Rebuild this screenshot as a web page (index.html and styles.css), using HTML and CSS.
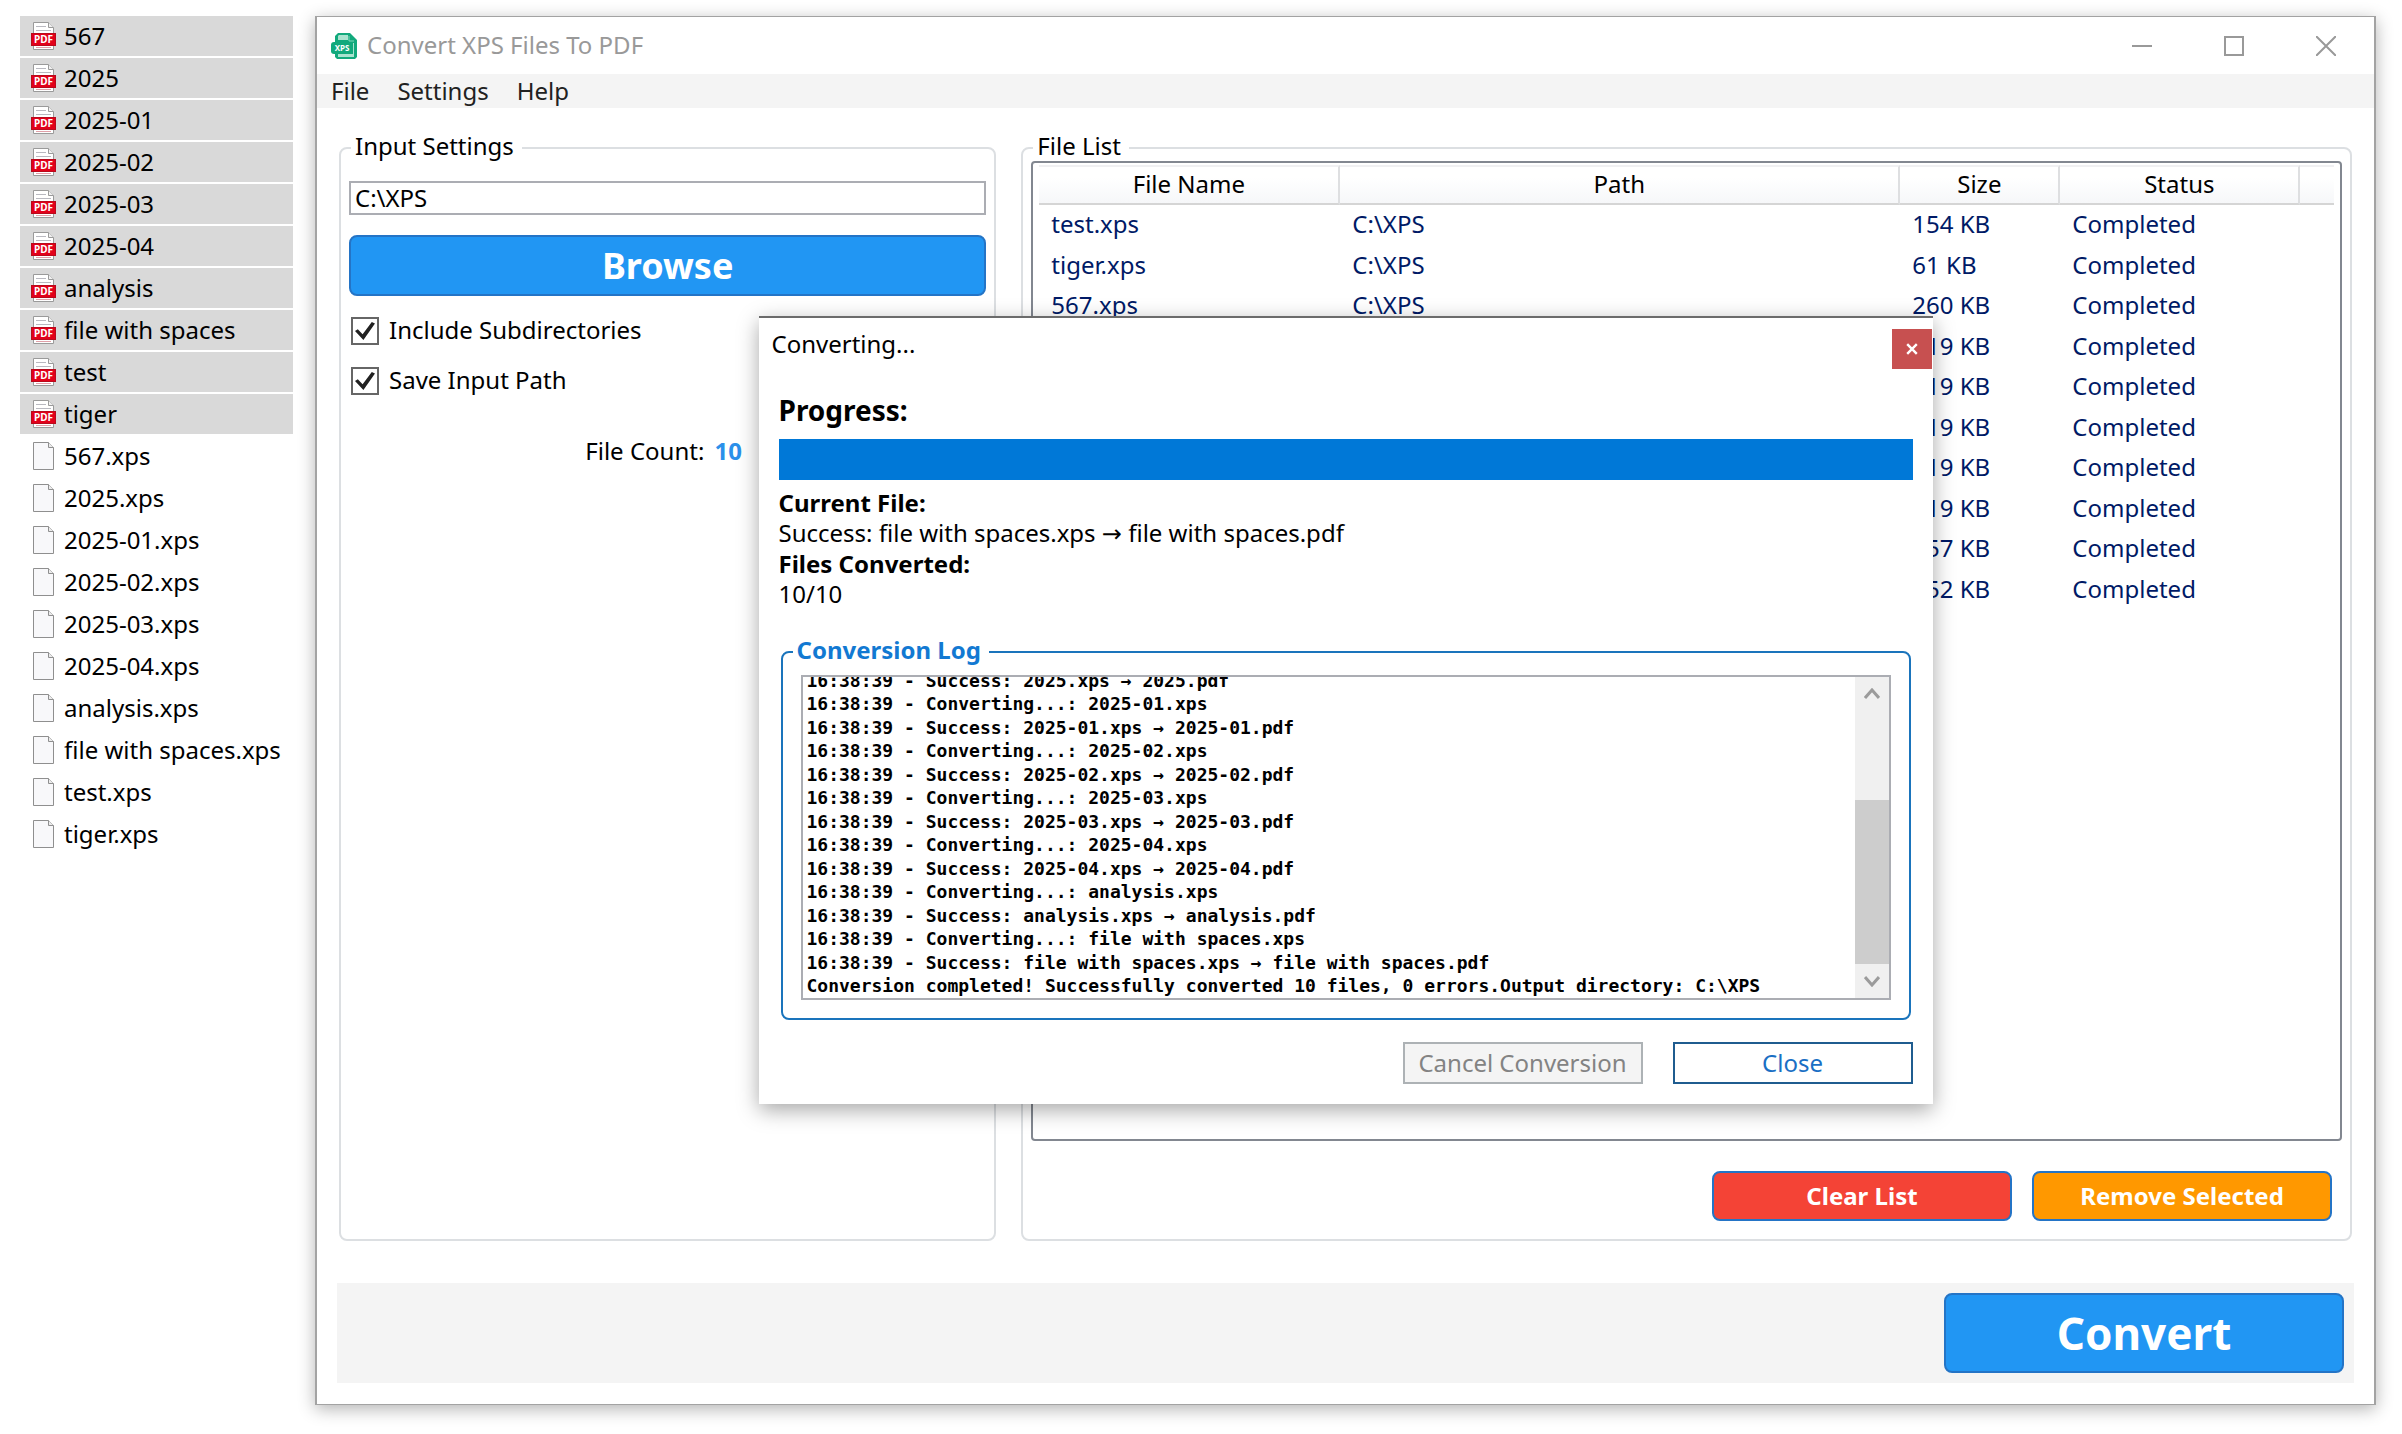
FILE: index.html
```html
<!DOCTYPE html>
<html lang="en">
<head>
    <meta charset="UTF-8">
    <meta name="viewport" content="width=device-width, initial-scale=1.0">
    <title>Convert XPS Files To PDF</title>
    <link rel="stylesheet" href="styles.css">
</head>
<body>
    <svg class="icon-defs" aria-hidden="true">
        <symbol id="icon-pdf" viewBox="0 0 25 28">
            <path d="M2.5.5h15l5 5v22h-20z" fill="#fff" stroke="#9a9a9a"/>
            <path d="M17.5.5v5h5" fill="#f0f0f0" stroke="#9a9a9a"/>
            <path d="M5 4.5h10M5 8.5h15" stroke="#b9b9c0"/>
            <path d="M5 25.5h15" stroke="#e0a0a8"/>
            <rect x=".5" y="11.5" width="24" height="12" fill="#e2001a" stroke="#b80a1c"/>
            <text x="12.5" y="21" class="icon-pdf-text">PDF</text>
        </symbol>
        <symbol id="icon-file" viewBox="0 0 25 28">
            <path d="M2.5.5h15l5 5v22h-20z" fill="#f8f8fa" stroke="#8f8f8f"/>
            <path d="M17.5.5v5h5" fill="#ececec" stroke="#8f8f8f"/>
        </symbol>
    </svg>

    <aside class="file-panel">
        <ul>
            <li class="selected"><svg><use href="#icon-pdf"/></svg>567</li>
            <li class="selected"><svg><use href="#icon-pdf"/></svg>2025</li>
            <li class="selected"><svg><use href="#icon-pdf"/></svg>2025-01</li>
            <li class="selected"><svg><use href="#icon-pdf"/></svg>2025-02</li>
            <li class="selected"><svg><use href="#icon-pdf"/></svg>2025-03</li>
            <li class="selected"><svg><use href="#icon-pdf"/></svg>2025-04</li>
            <li class="selected"><svg><use href="#icon-pdf"/></svg>analysis</li>
            <li class="selected"><svg><use href="#icon-pdf"/></svg>file with spaces</li>
            <li class="selected"><svg><use href="#icon-pdf"/></svg>test</li>
            <li class="selected"><svg><use href="#icon-pdf"/></svg>tiger</li>
            <li><svg><use href="#icon-file"/></svg>567.xps</li>
            <li><svg><use href="#icon-file"/></svg>2025.xps</li>
            <li><svg><use href="#icon-file"/></svg>2025-01.xps</li>
            <li><svg><use href="#icon-file"/></svg>2025-02.xps</li>
            <li><svg><use href="#icon-file"/></svg>2025-03.xps</li>
            <li><svg><use href="#icon-file"/></svg>2025-04.xps</li>
            <li><svg><use href="#icon-file"/></svg>analysis.xps</li>
            <li><svg><use href="#icon-file"/></svg>file with spaces.xps</li>
            <li><svg><use href="#icon-file"/></svg>test.xps</li>
            <li><svg><use href="#icon-file"/></svg>tiger.xps</li>
        </ul>
    </aside>

    <div class="window">
        <header class="title-bar">
            <svg class="app-icon" viewBox="0 0 26 26">
                <path d="M7 0h12l7 7v17l-2 2H6l-2-2V3z" fill="#12a97c"/>
                <path d="M8 2h9v5H7V3z" fill="#a9e3cf"/>
                <path d="M18 3v5h5" fill="none" stroke="#7fd6b8"/>
                <path d="M7 21h16v3H7zM22 10h1v11h-1z" fill="#a9e3cf"/>
                <rect y="9" width="22" height="12" rx="3" fill="#12a97c"/>
                <text x="11" y="18" class="app-icon-text">XPS</text>
            </svg>
            <h1>Convert XPS Files To PDF</h1>
            <div class="window-buttons">
                <button aria-label="Minimize"><svg viewBox="0 0 20 20"><path d="M0 10h20"/></svg></button>
                <button aria-label="Maximize"><svg viewBox="0 0 20 20"><path d="M1 1h18v18H1z"/></svg></button>
                <button aria-label="Close"><svg viewBox="0 0 20 20"><path d="M0 0l20 20M20 0L0 20"/></svg></button>
            </div>
        </header>
        <nav class="menu-bar">
            <button>File</button>
            <button>Settings</button>
            <button>Help</button>
        </nav>

        <main>
            <fieldset class="input-settings">
                <legend>Input Settings</legend>
                <input type="text" class="path-input" aria-label="Input path" value="C:\XPS">
                <button class="btn btn-blue browse">Browse</button>
                <label class="check"><input type="checkbox" checked>Include Subdirectories</label>
                <label class="check"><input type="checkbox" checked>Save Input Path</label>
                <p class="file-count">File Count: <strong>10</strong></p>
            </fieldset>

            <fieldset class="file-list">
                <legend>File List</legend>
                <div class="list-view">
                    <table>
                        <colgroup>
                            <col class="col-name">
                            <col class="col-path">
                            <col class="col-size">
                            <col class="col-status">
                            <col>
                        </colgroup>
                        <thead>
                            <tr><th>File Name</th><th>Path</th><th>Size</th><th>Status</th><th></th></tr>
                        </thead>
                        <tbody>
                            <tr><td>test.xps</td><td>C:\XPS</td><td>154 KB</td><td>Completed</td><td></td></tr>
                            <tr><td>tiger.xps</td><td>C:\XPS</td><td>61 KB</td><td>Completed</td><td></td></tr>
                            <tr><td>567.xps</td><td>C:\XPS</td><td>260 KB</td><td>Completed</td><td></td></tr>
                            <tr><td>2025.xps</td><td>C:\XPS</td><td>119 KB</td><td>Completed</td><td></td></tr>
                            <tr><td>2025-01.xps</td><td>C:\XPS</td><td>119 KB</td><td>Completed</td><td></td></tr>
                            <tr><td>2025-02.xps</td><td>C:\XPS</td><td>119 KB</td><td>Completed</td><td></td></tr>
                            <tr><td>2025-03.xps</td><td>C:\XPS</td><td>119 KB</td><td>Completed</td><td></td></tr>
                            <tr><td>2025-04.xps</td><td>C:\XPS</td><td>119 KB</td><td>Completed</td><td></td></tr>
                            <tr><td>analysis.xps</td><td>C:\XPS</td><td>157 KB</td><td>Completed</td><td></td></tr>
                            <tr><td>file with spaces.xps</td><td>C:\XPS</td><td>152 KB</td><td>Completed</td><td></td></tr>
                        </tbody>
                    </table>
                </div>
                <div class="list-actions">
                    <button class="btn btn-red">Clear List</button>
                    <button class="btn btn-orange">Remove Selected</button>
                </div>
            </fieldset>
        </main>

        <footer>
            <button class="btn btn-blue convert">Convert</button>
        </footer>

        <div class="dialog" role="dialog" aria-labelledby="dialog-title">
            <div class="dialog-header">
                <h2 id="dialog-title">Converting...</h2>
                <button class="dialog-close" aria-label="Close dialog">
                    <svg viewBox="0 0 10 10"><path d="M1 1l8 8M9 1L1 9"/></svg>
                </button>
            </div>
            <div class="dialog-body">
                <label class="progress-label" for="progress">Progress:</label>
                <progress id="progress" value="10" max="10"></progress>
                <dl>
                    <dt>Current File:</dt>
                    <dd>Success: file with spaces.xps <span class="arrow">→</span> file with spaces.pdf</dd>
                    <dt>Files Converted:</dt>
                    <dd>10/10</dd>
                </dl>
                <fieldset class="log-group">
                    <legend>Conversion Log</legend>
                    <div class="log">
                        <ol class="log-lines">
                            <li>16:38:39 - Success: 2025.xps → 2025.pdf</li>
                            <li>16:38:39 - Converting...: 2025-01.xps</li>
                            <li>16:38:39 - Success: 2025-01.xps → 2025-01.pdf</li>
                            <li>16:38:39 - Converting...: 2025-02.xps</li>
                            <li>16:38:39 - Success: 2025-02.xps → 2025-02.pdf</li>
                            <li>16:38:39 - Converting...: 2025-03.xps</li>
                            <li>16:38:39 - Success: 2025-03.xps → 2025-03.pdf</li>
                            <li>16:38:39 - Converting...: 2025-04.xps</li>
                            <li>16:38:39 - Success: 2025-04.xps → 2025-04.pdf</li>
                            <li>16:38:39 - Converting...: analysis.xps</li>
                            <li>16:38:39 - Success: analysis.xps → analysis.pdf</li>
                            <li>16:38:39 - Converting...: file with spaces.xps</li>
                            <li>16:38:39 - Success: file with spaces.xps → file with spaces.pdf</li>
                            <li>Conversion completed! Successfully converted 10 files, 0 errors.Output directory: C:\XPS</li>
                        </ol>
                        <div class="scrollbar">
                            <button aria-label="Scroll up"><svg viewBox="0 0 16 12"><path d="M1 10l7-8 7 8"/></svg></button>
                            <div class="scroll-track"><div class="scroll-thumb"></div></div>
                            <button aria-label="Scroll down"><svg viewBox="0 0 16 12"><path d="M1 2l7 8 7-8"/></svg></button>
                        </div>
                    </div>
                </fieldset>
                <div class="dialog-actions">
                    <button disabled>Cancel Conversion</button>
                    <button class="close-button">Close</button>
                </div>
            </div>
        </div>
    </div>
</body>
</html>
```

FILE: styles.css
```css
* {
    box-sizing: border-box;
    margin: 0;
    padding: 0;
}
body {
    display: flex;
    min-height: 100vh;
    padding: 16px 26px 29px 20px;
    gap: 22px;
    background: #fff;
    color: #000;
    font-family: "Noto Sans", "Open Sans", sans-serif;
    font-size: 24px;
    line-height: 32px;
}
button, input {
    font: inherit;
    color: inherit;
}
button {
    background: none;
    border: none;
}
h1, h2 {
    font-size: 24px;
    font-weight: normal;
}
ul, ol {
    list-style: none;
}
.icon-defs {
    position: absolute;
    width: 0;
    height: 0;
}
.icon-pdf-text {
    font: bold 10px "Noto Sans", sans-serif;
    fill: #fff;
    text-anchor: middle;
}

/* file panel */
.file-panel {
    width: 273px;
    flex-shrink: 0;
}
.file-panel ul {
    display: flex;
    flex-direction: column;
    gap: 2px;
}
.file-panel li {
    display: flex;
    align-items: center;
    gap: 8px;
    height: 40px;
    padding-left: 11px;
    white-space: nowrap;
}
.file-panel li.selected {
    background: #d9d9d9;
}
.file-panel svg {
    width: 25px;
    height: 28px;
}

/* main window */
.window {
    position: relative;
    flex: 1;
    min-width: 0;
    display: flex;
    flex-direction: column;
    background: #fff;
    border: 1px solid #a3a3a3;
    border-width: 1px 2px;
    box-shadow: 0 4px 16px rgba(0, 0, 0, 0.3);
}
.title-bar {
    display: flex;
    align-items: center;
    height: 57px;
    padding-left: 14px;
    color: #999;
}
.title-bar h1 {
    padding-bottom: 2px;
}
.app-icon {
    width: 26px;
    height: 26px;
    margin-right: 10px;
}
.app-icon-text {
    font: bold 8px "Noto Sans", sans-serif;
    fill: #fff;
    text-anchor: middle;
}
.window-buttons {
    display: flex;
    height: 100%;
    margin: 0 2px 0 auto;
}
.window-buttons button {
    display: flex;
    align-items: center;
    justify-content: center;
    width: 92px;
}
.window-buttons svg {
    width: 20px;
    height: 20px;
    fill: none;
    stroke: #999;
    stroke-width: 2;
}
.menu-bar {
    display: flex;
    height: 34px;
    background: #f4f4f4;
    color: #212121;
}
.menu-bar button {
    padding: 0 14px;
}
main {
    flex: 1;
    display: grid;
    grid-template-columns: 1fr 2fr;
    padding: 27px 20px 42px;
}
fieldset {
    min-width: 0;
    border: 2px solid #dcdfe2;
    border-radius: 8px;
}
legend {
    margin-left: 2px;
    padding: 0 8px 4px 4px;
    line-height: 22px;
}
.input-settings {
    margin: 0 13px 0 2px;
    padding: 20px 8px 18px;
}
.path-input {
    display: block;
    width: 100%;
    height: 34px;
    padding: 0 4px 2px;
    border: 2px solid #abadb3;
}
.btn {
    color: #fff;
    font-weight: bold;
    border: 2px solid #2474c6;
    border-radius: 8px;
}
.btn-blue {
    background: #2196f3;
}
.btn-red {
    background: #f44336;
}
.btn-orange {
    background: #ff9800;
}
.browse {
    width: 100%;
    height: 61px;
    margin: 20px 0 9px;
    font-size: 36px;
}
.check {
    display: flex;
    align-items: center;
    gap: 10px;
    height: 50px;
    padding-left: 2px;
}
.check input {
    appearance: none;
    width: 28px;
    height: 28px;
    margin-top: 2px;
    border: 2px solid #666;
    display: grid;
    place-content: center;
}
.check input:checked::before {
    content: "";
    width: 20px;
    height: 18px;
    background: #212121;
    clip-path: polygon(0 50%, 14% 40%, 38% 68%, 84% 0, 100% 8%, 42% 100%);
}
.file-count {
    margin-top: 30px;
    padding-right: 8px;
    text-align: center;
}
.file-count strong {
    margin-left: 4px;
    color: #2b90ea;
}
.file-list {
    display: flex;
    flex-direction: column;
    margin: 0 2px 0 12px;
    padding: 0 8px 18px;
}
.list-view {
    flex: 1;
    padding: 2px 6px;
    border: 2px solid #828790;
    border-radius: 4px;
}
table {
    width: 100%;
    table-layout: fixed;
    border-collapse: separate;
    border-spacing: 0;
}
.col-name {
    width: 301px;
}
.col-path {
    width: 560px;
}
.col-size {
    width: 160px;
}
.col-status {
    width: 240px;
}
th {
    height: 40px;
    padding-bottom: 2px;
    font-weight: normal;
    background: linear-gradient(#fff 30%, #f6f7f9);
    border-top: 2px solid #f0f0f2;
    border-right: 2px solid #dedfe1;
    border-bottom: 2px solid #d5d5d5;
}
th:last-child {
    border-right: none;
}
td {
    height: 40px;
    padding: 0 0 2px 12px;
    color: #001a66;
    white-space: nowrap;
}
tr:nth-child(even) td {
    height: 41px;
}
.list-actions {
    display: flex;
    justify-content: flex-end;
    gap: 20px;
    margin: 30px 10px 0 0;
}
.list-actions .btn {
    width: 300px;
    height: 50px;
}
footer {
    display: flex;
    justify-content: flex-end;
    margin: 0 20px 21px;
    padding: 10px;
    background: #f4f4f4;
}
.convert {
    width: 400px;
    height: 80px;
    font-size: 44px;
}

/* progress dialog */
.dialog {
    position: absolute;
    top: 299px;
    left: 50%;
    transform: translateX(-50%);
    width: 1174px;
    background: #fff;
    border-top: 2px solid #6b6b6b;
    box-shadow: 0 6px 20px rgba(0, 0, 0, 0.35);
}
.dialog-header {
    display: flex;
    justify-content: space-between;
    padding: 11px 1px 3px 13px;
}
.dialog-header h2 {
    line-height: 30px;
}
.dialog-close {
    width: 40px;
    height: 40px;
    background: #c75050;
}
.dialog-close svg {
    width: 12px;
    height: 12px;
    margin: auto;
    display: block;
    stroke: #fff;
    stroke-width: 2;
}
.dialog-body {
    display: flex;
    flex-direction: column;
    padding: 18px 20px 20px;
}
.progress-label {
    font-size: 28px;
    font-weight: bold;
    line-height: 40px;
}
progress {
    appearance: none;
    width: 100%;
    height: 41px;
    margin: 9px 0 8px;
    border: none;
}
progress::-webkit-progress-bar {
    background: #e6e6e6;
}
progress::-webkit-progress-value {
    background: #0078d7;
}
dl {
    line-height: 30px;
}
dt {
    font-weight: bold;
}
.arrow {
    font-family: "DejaVu Sans", sans-serif;
}
.log-group {
    margin: 30px 2px 0;
    padding: 10px 18px 18px;
    border-color: #1a74bc;
}
.log-group legend {
    margin-left: -8px;
    color: #1279d2;
    font-weight: bold;
}
.log {
    display: flex;
    height: 325px;
    border: 2px solid #abadb3;
}
.log-lines {
    flex: 1;
    display: flex;
    flex-direction: column;
    justify-content: flex-end;
    overflow: hidden;
    padding-left: 4px;
    font-family: "DejaVu Sans Mono", monospace;
    font-size: 18px;
    font-weight: bold;
    line-height: 23px;
    white-space: nowrap;
}
.log-lines li {
    flex-shrink: 0;
}
.log-lines li:nth-child(even) {
    line-height: 24px;
}
.scrollbar {
    display: flex;
    flex-direction: column;
    width: 34px;
    background: #f0f0f0;
}
.scrollbar button {
    height: 34px;
}
.scrollbar svg {
    width: 16px;
    height: 12px;
    margin: auto;
    display: block;
    fill: none;
    stroke: #9b9b9b;
    stroke-width: 3;
}
.scroll-track {
    flex: 1;
    display: flex;
    flex-direction: column;
    justify-content: flex-end;
}
.scroll-thumb {
    height: 65%;
    background: #cdcdcd;
}
.dialog-actions {
    display: flex;
    justify-content: flex-end;
    gap: 30px;
    margin-top: 22px;
}
.dialog-actions button {
    width: 240px;
    height: 42px;
    border: 2px solid #adb2b5;
    background: #f4f4f4;
    color: #838383;
    line-height: 30px;
}
.dialog-actions .close-button {
    border-color: #1f5c8f;
    background: #fff;
    color: #1a6fc4;
}
```
